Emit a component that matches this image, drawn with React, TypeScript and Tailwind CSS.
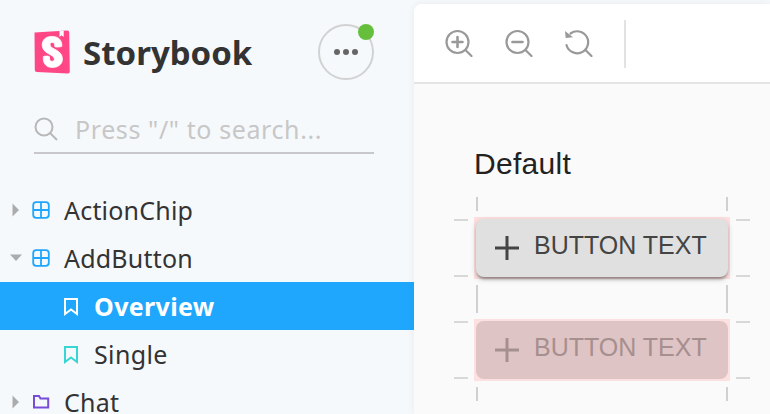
const sans = "font-['Noto_Sans','Liberation_Sans',sans-serif]";

function ComponentIcon() {
  return (
    <svg width="18" height="18" viewBox="0 0 18 18" fill="none" stroke="#1ea7fd" strokeWidth="1.800" className="shrink-0">
      <rect x="1.200" y="1.200" width="15.600" height="15.600" rx="3" />
      <path d="M9 1.200v15.600M1.200 9h15.600" />
    </svg>
  );
}

function FolderIcon() {
  return (
    <svg width="18" height="18" viewBox="0 0 18 18" fill="none" stroke="#774dd7" strokeWidth="2" className="shrink-0">
      <path d="M2 3h5l1.500 2.500H16.200V14.500H2z" />
    </svg>
  );
}

function BookmarkIcon({ color }: { color: string }) {
  return (
    <svg width="16" height="20" viewBox="0 0 16 20" fill="none" stroke={color} strokeWidth="2" className="mt-[1px] shrink-0">
      <path d="M2 2h12v15l-6-4.500L2 17z" />
    </svg>
  );
}

function Arrow({ down }: { down?: boolean }) {
  return (
    <svg width="14" height="14" viewBox="0 0 14 14" fill="#acacac" className="shrink-0">
      {down ? <path d="M1 3.500h12L7 10z" /> : <path d="M3.500 0.500v13L10 7z" />}
    </svg>
  );
}

function TreeRow({ label, icon, down }: { label: string; icon: React.ReactNode; down?: boolean }) {
  return (
    <div className={`flex h-12 items-center pl-[4px] ${sans}`}>
      <span className="flex w-[28px] justify-center pr-[4px]"><Arrow down={down} /></span>
      {icon}
      <span className="ml-[14px] text-[25px] leading-none tracking-[0.2px] text-[#333333]">{label}</span>
    </div>
  );
}

function ZoomIcon({ kind }: { kind: "plus" | "minus" | "reset" }) {
  return (
    <svg width="28" height="28" viewBox="0 0 28 28" fill="none" stroke="#999999" strokeWidth="2.200" strokeLinecap="round">
      {kind === "reset" ? (
        <>
          <path d="M5.500 4.500A11 11 0 1 1 1.500 16" />
          <path d="M0 2l.7 7 7.300-.7z" fill="#999999" stroke="none" />
        </>
      ) : (
        <circle cx="12.500" cy="13" r="11" />
      )}
      <path d="M20.500 21l6 6" />
      {kind === "plus" && <path d="M7.500 13h10M12.500 8v10" strokeWidth="2.600" />}
      {kind === "minus" && <path d="M7.500 13h10" strokeWidth="2.600" />}
    </svg>
  );
}

function Guides() {
  return (
    <>
      <span className="absolute left-[-20px] top-[2px] h-[2px] w-[14px] bg-[#d8d8d8]" />
      <span className="absolute left-[-20px] top-[58px] h-[2px] w-[14px] bg-[#d8d8d8]" />
      <span className="absolute right-[-20px] top-[2px] h-[2px] w-[14px] bg-[#d8d8d8]" />
      <span className="absolute right-[-20px] top-[58px] h-[2px] w-[14px] bg-[#d8d8d8]" />
    </>
  );
}

function VGuides({ h }: { h: string }) {
  return (
    <div className={`flex w-[252px] justify-between ${h}`}>
      <span className="h-full w-[2px] bg-[#d0d0d0]" />
      <span className="h-full w-[2px] bg-[#d0d0d0]" />
    </div>
  );
}

function DemoButton({ disabled }: { disabled?: boolean }) {
  return (
    <div className="relative w-[256px] bg-[#fde0e0] p-[2px]">
      <Guides />
      <div
        className={`flex h-[58px] items-center rounded-[8px] pl-[18px] font-['Liberation_Sans',sans-serif] text-[25px] leading-none ${
          disabled
            ? "bg-[#dec4c4] text-[#a68f8f]"
            : "bg-[#e0e0e0] text-[#444444] shadow-[0_3px_3px_-1px_rgba(0,0,0,0.35),0_2px_6px_rgba(0,0,0,0.18)]"
        }`}
      >
        <svg width="26" height="26" viewBox="0 0 26 26" className="shrink-0" fill="none" stroke={disabled ? "#a68f8f" : "#444444"} strokeWidth="3">
          <path d="M13 1v24M1 13h24" />
        </svg>
        <span className="relative top-[-3px] ml-[14px]">BUTTON TEXT</span>
      </div>
    </div>
  );
}

export default function App() {
  return (
    <div className={`flex h-[414px] w-[770px] overflow-hidden bg-[#f6f9fc] ${sans}`}>
      <aside className="w-[414px] shrink-0">
        <div className="ml-[34px] mr-[40px] flex h-[104px] items-start pt-[24px]">
          <div className="mt-[6px] flex h-[44px] flex-1 items-center">
            <svg width="36" height="44" viewBox="0 0 36 44" className="shrink-0">
              <path d="M0.500 2.500 33 0.500a2 2 0 0 1 2.200 2L35.800 41.500a2 2 0 0 1-2.200 2L2.800 42a2 2 0 0 1-2-2z" fill="#ff4785" />
              <path d="M25.500 1v6l2-1.800 2.200 1.800V.8z" fill="#ffffff" />
              <path d="M21 16.500c0 .9 6 .5 6.900-.2 0-6.500-3.500-9.900-9.800-9.900-6.300 0-9.900 3.400-9.900 8.600 0 9 12.200 9.200 12.200 14.100 0 1.400-.7 2.200-2.200 2.200-2 0-2.800-1-2.700-4.500 0-.8-6-1-6.200 0-.5 8.300 4.600 10.700 8.900 10.700 5.700 0 10.200-3 10.200-8.500 0-9.700-12.400-9.500-12.400-14.300 0-1.900 1.400-2.200 2.300-2.200 .9 0 2.600.2 2.400 4z" fill="#ffffff" stroke="#ffffff" strokeWidth="0.800" />
            </svg>
            <span className="ml-[13px] font-['Noto_Sans',sans-serif] text-[33px] font-bold leading-none text-[#333333]">
              Storybook
            </span>
          </div>
          <div className="relative flex h-[56px] w-[56px] shrink-0 items-center justify-center rounded-full border-2 border-[#d2d2d2]">
            <span className="flex gap-[3px]">
              <span className="h-[6px] w-[6px] rounded-full bg-[#666666]" />
              <span className="h-[6px] w-[6px] rounded-full bg-[#666666]" />
              <span className="h-[6px] w-[6px] rounded-full bg-[#666666]" />
            </span>
            <span className="absolute right-[-2px] top-[-2px] h-4 w-4 rounded-full bg-[#66bf3c]" />
          </div>
        </div>
        <div className="ml-[34px] mr-[40px] mt-[4px] flex h-[46px] items-center border-b-2 border-[#c8c8cc] pb-[2px]">
          <svg width="24" height="24" viewBox="0 0 24 24" fill="none" stroke="#b8b8b8" strokeWidth="2" className="shrink-0">
            <circle cx="10" cy="10" r="8.500" />
            <path d="M16 16l7 7" />
          </svg>
          <span className="ml-[17px] text-[25px] leading-none tracking-[0.6px] text-[#c7c7c7]">Press "/" to search...</span>
        </div>
        <div className="mt-[32px]">
          <TreeRow label="ActionChip" icon={<ComponentIcon />} />
          <TreeRow label="AddButton" icon={<ComponentIcon />} down />
          <div className="flex h-12 items-center bg-[#1ea7fd] pl-[63px]">
            <BookmarkIcon color="#ffffff" />
            <span className="ml-[15px] text-[25px] font-bold leading-none tracking-[0.35px] text-white">Overview</span>
          </div>
          <div className="flex h-12 items-center pl-[63px]">
            <BookmarkIcon color="#37d5d3" />
            <span className="ml-[15px] text-[25px] leading-none tracking-[0.35px] text-[#333333]">Single</span>
          </div>
          <TreeRow label="Chat" icon={<FolderIcon />} />
        </div>
      </aside>
      <main className="mt-[4px] flex min-w-0 flex-1 flex-col overflow-hidden rounded-tl-[8px] bg-[#fafafa] shadow-[0_0_8px_rgba(0,0,0,0.06)]">
        <div className="flex h-[80px] shrink-0 items-center border-b-2 border-[#e4e4e4] bg-white pl-[31px]">
          <div className="flex gap-[32px]">
            <ZoomIcon kind="plus" />
            <ZoomIcon kind="minus" />
            <ZoomIcon kind="reset" />
          </div>
          <span className="ml-[31px] mt-[2px] h-[48px] w-[2px] bg-[#e2e2e2]" />
        </div>
        <div className="pl-[60px]">
          <div className="mt-[62px] font-['Liberation_Sans',sans-serif] text-[30px] leading-[36px] tracking-[0.3px] text-[#222222]">
            Default
          </div>
          <div className="mt-[15px] pl-[2px]"><VGuides h="h-[14px]" /></div>
          <div className="mt-[6px]"><DemoButton /></div>
          <div className="mt-[6px] pl-[2px]"><VGuides h="h-[28px]" /></div>
          <div className="mt-[6px]"><DemoButton disabled /></div>
          <div className="mt-[6px] pl-[2px]"><VGuides h="h-[14px]" /></div>
        </div>
      </main>
    </div>
  );
}
